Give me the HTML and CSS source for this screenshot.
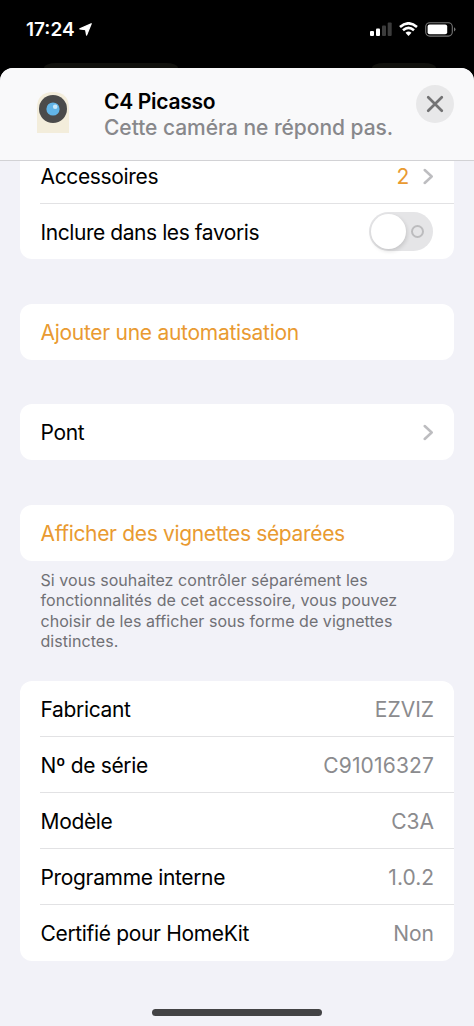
FILE: index.html
```html
<!DOCTYPE html>
<html lang="fr">
<head>
<meta charset="utf-8">
<title>C4 Picasso</title>
<link rel="stylesheet" href="styles.css">
</head>
<body>
<div class="phone">
  <div class="status">
    <div class="status-left">
      <span class="time">17:24</span>
      <svg class="location" width="13" height="13" viewBox="0 0 13 13"><path d="M12.2.7 7.6 12.1 6.6 6.7.8 5.9Z" fill="#fff" stroke="#fff" stroke-width="1.2" stroke-linejoin="round"/></svg>
    </div>
    <div class="status-right">
      <svg width="22" height="15" viewBox="0 0 22 15"><rect y="9" width="4" height="5" rx="1" fill="#fff"/><rect x="6" y="6.5" width="4" height="7.5" rx="1" fill="#fff"/><rect x="12" y="3.5" width="4" height="10.5" rx="1" fill="#3c3c3c"/><rect x="17.7" y="0.5" width="4" height="13.5" rx="1" fill="#3c3c3c"/></svg>
      <svg width="19" height="14" viewBox="0 0 19 14" fill="none" stroke="#fff" stroke-width="2.6"><path d="M1 4.9Q9.5-2.3 18 4.9"/><path d="M4 8.3Q9.5 3.5 15 8.3"/><path d="M6.5 10.8Q9.5 8.4 12.5 10.8L9.5 13.9Z" fill="#fff" stroke="none"/></svg>
      <svg width="31" height="15" viewBox="0 0 31 15"><rect x=".7" y=".7" width="26.6" height="13.4" rx="4" fill="none" stroke="#777" stroke-width="1.1"/><rect x="2.6" y="2.5" width="19.6" height="9.8" rx="2" fill="#fff"/><path d="M29 5.2q3 2.2 0 4.4Z" fill="#777"/></svg>
    </div>
  </div>
  <div class="backdrop"><i class="tab tab-wide"></i><i class="tab tab-small"></i></div>
  <main class="sheet">
    <header class="header">
      <svg class="camera" width="34" height="43" viewBox="0 0 34 43"><path d="M1 42V17C1 6 7 1 17 1s16 5 16 16v25Z" fill="#f3eddb"/><circle cx="17" cy="18" r="14" fill="#4b4b4b"/><circle cx="17" cy="18" r="6.6" fill="#62b5e8"/><circle cx="19.2" cy="15.8" r="2.3" fill="#c9e9fb"/></svg>
      <div class="heading">
        <h1 class="title">C4 Picasso</h1>
        <p class="subtitle">Cette caméra ne répond pas.</p>
      </div>
      <button class="close" aria-label="Fermer"><svg width="18" height="18" viewBox="0 0 18 18"><path d="m2.2 2.2 13.6 13.6M15.8 2.2 2.2 15.8" fill="none" stroke="#737374" stroke-width="2.7" stroke-linecap="round"/></svg></button>
    </header>
    <section class="card card-first">
      <div class="row row-cut"><span>Accessoires</span><span class="link">2</span><svg class="chevron" width="11" height="17" viewBox="0 0 11 17"><path d="m1.7 2 7 6.5-7 6.5" fill="none" stroke="#bdbdc0" stroke-width="2.5" stroke-linecap="round" stroke-linejoin="round"/></svg></div>
      <div class="row"><span class="tight">Inclure dans les favoris</span><span class="toggle"><i class="knob"></i><i class="ring"></i></span></div>
    </section>
    <section class="card"><div class="row action wide">Ajouter une automatisation</div></section>
    <section class="card"><div class="row"><span>Pont</span><svg class="chevron" width="11" height="17" viewBox="0 0 11 17"><path d="m1.7 2 7 6.5-7 6.5" fill="none" stroke="#bdbdc0" stroke-width="2.5" stroke-linecap="round" stroke-linejoin="round"/></svg></div></section>
    <section class="card"><div class="row action">Afficher des vignettes séparées</div></section>
    <p class="note">Si vous souhaitez contrôler séparément les<br>fonctionnalités de cet accessoire, vous pouvez<br>choisir de les afficher sous forme de vignettes<br>distinctes.</p>
    <section class="card details">
      <div class="row"><span>Fabricant</span><span class="value">EZVIZ</span></div>
      <div class="row"><span>Nº de série</span><span class="value serial">C91016327</span></div>
      <div class="row"><span>Modèle</span><span class="value">C3A</span></div>
      <div class="row"><span>Programme interne</span><span class="value">1.0.2</span></div>
      <div class="row"><span>Certifié pour HomeKit</span><span class="value">Non</span></div>
    </section>
    <div class="home-bar"></div>
  </main>
</div>
</body>
</html>
```
FILE: styles.css
```css
* { box-sizing: border-box; }
body { margin: 0; background: #000; font-family: Inter, "Liberation Sans", sans-serif; }
h1, p { margin: 0; }
.phone { width: 474px; height: 1026px; display: flex; flex-direction: column; overflow: hidden; background: #000; }
.status { height: 63px; display: flex; justify-content: space-between; padding: 0 18px 0 26px; color: #fff; }
.status-left { display: flex; align-items: flex-start; gap: 4px; padding-top: 18px; }
.time { font-size: 19px; line-height: 23px; font-weight: 600; letter-spacing: 0; }
.location { margin-top: 5px; }
.status-right { display: flex; align-items: flex-start; gap: 7px; padding-top: 22px; }
.backdrop { height: 5px; display: flex; justify-content: space-between; padding: 0 38px 0 44px; }
.tab { height: 5px; background: #11110d; border-radius: 12px 12px 0 0 / 5px 5px 0 0; }
.tab-wide { width: 134px; }
.tab-small { width: 64px; }
.sheet { flex: 1; display: flex; flex-direction: column; background: #f2f2f8; border-radius: 13px 13px 0 0; overflow: hidden; }
.header { height: 93px; flex: none; display: flex; align-items: flex-start; padding: 17px 20px 0 36px; background: #f9f9fa; border-bottom: 1px solid #d2d2d5; }
.camera { margin-top: 6px; }
.heading { flex: 1; padding: 4px 0 0 34px; }
.title { font-size: 21px; line-height: 26px; font-weight: 600; letter-spacing: -0.3px; color: #000; }
.subtitle { font-size: 21px; line-height: 26px; font-weight: 500; letter-spacing: -0.04px; color: #88888b; white-space: nowrap; }
.close { width: 38px; height: 38px; border: 0; padding: 0; border-radius: 50%; background: #e8e8e9; display: flex; align-items: center; justify-content: center; }
.card { flex: none; margin: 0 20px 44.5px; background: #fff; border-radius: 12px; overflow: hidden; color: #000; font-size: 21px; letter-spacing: -0.34px; }
.card-first { border-radius: 0 0 12px 12px; }
.row { height: 56px; margin-left: 20px; padding: 1px 20px 0 0.5px; display: flex; align-items: center; white-space: nowrap; }
.row > :first-child { flex: 1; }
.row + .row { border-top: 1px solid #e2e2e4; padding-top: 0; }
.row-cut { height: 42px; padding-top: 0; padding-bottom: 11px; }
.tight { letter-spacing: -0.43px; padding-top: 1px; }
.wide { letter-spacing: -0.28px; }
.link, .action { color: #e99a31; }
.chevron { margin-left: 14px; }
.value { color: #8b8b8e; letter-spacing: 0; }
.serial { letter-spacing: 0.15px; }
.toggle { width: 64px; height: 39px; margin-right: 1px; border-radius: 20px; background: #e5e5e7; display: flex; align-items: center; padding-left: 2px; gap: 5px; }
.knob { width: 35px; height: 35px; border-radius: 50%; background: #fff; box-shadow: 1px 2px 4px rgba(0, 0, 0, 0.14); }
.ring { width: 13px; height: 13px; border: 2px solid #bcbcbe; border-radius: 50%; }
.note { margin: -35px 41px 0 40.5px; font-size: 16px; line-height: 20.3px; letter-spacing: 0.05px; color: #707075; white-space: nowrap; }
.details { margin-top: 29.5px; margin-bottom: 0; }
.details .row { padding-top: 3px; }
.details .row:first-child { height: 55px; padding-top: 2px; }
.details .row:last-child { height: 57px; padding-top: 2px; }
.home-bar { width: 170px; height: 7px; margin: auto auto 10px; border-radius: 4px; background: #434345; }
```
